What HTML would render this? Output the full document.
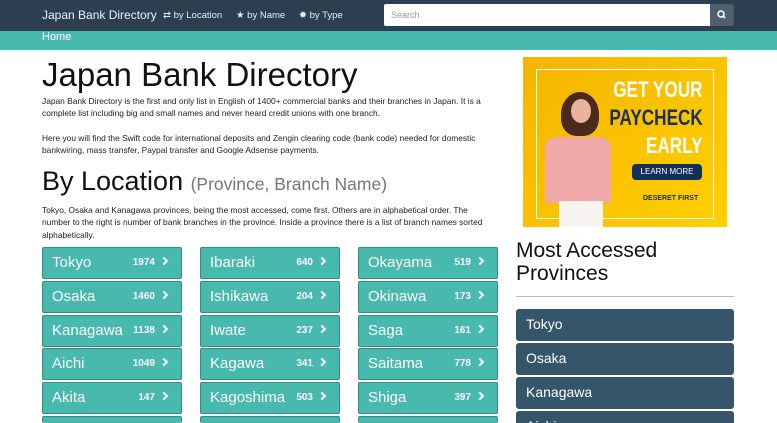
<!DOCTYPE html>
<html><head><meta charset="utf-8"><style>
*{box-sizing:border-box;margin:0;padding:0}
html,body{width:777px;height:423px;overflow:hidden}
body{font-family:"Liberation Sans",sans-serif;background:#fff;color:#222;position:relative}
.nav{position:absolute;left:0;top:0;width:777px;height:31px;background:#2c3e50;color:#fff}
.nav .brand{position:absolute;left:42px;top:8px;font-size:12px;color:#eef2f5}
.nav .l{position:absolute;top:10px;font-size:9.5px;color:#e8edf2}
.search{position:absolute;left:384px;top:4px;width:326px;height:22px;background:#fff;border-radius:2px 0 0 2px;font-size:9px;color:#999;padding:6px 7px}
.sbtn{position:absolute;left:710px;top:4px;width:24px;height:22px;background:#4f5f70;border-radius:0 3px 3px 0}
.crumb{position:absolute;left:0;top:31px;width:777px;height:19px;background:#48b9ad;color:#fff;font-size:11px;padding:0 42px;line-height:13px}
h1{position:absolute;left:42px;top:56px;font-size:33px;font-weight:normal;color:#111;white-space:nowrap}
.p{position:absolute;left:42px;font-size:8.4px;line-height:12.3px;width:450px;color:#222}
h2{position:absolute;left:42px;top:166px;font-size:27px;font-weight:normal;color:#111;white-space:nowrap}
h2 small{font-size:17.5px;color:#777}
.b{position:absolute;width:140px;height:32px;background:#48b9ad;border:1px solid #3a8a82;border-radius:2px;color:#fff;font-size:15px;padding:6px 0 0 9px;overflow:hidden}
.b.e{height:7px;border-bottom:0}
.b span{position:absolute;right:14px;top:9px;font-size:10px;font-weight:bold}
.b span:after{content:"";display:inline-block;width:4px;height:4px;border-top:2px solid #fff;border-right:2px solid #fff;transform:rotate(45deg);margin-left:6px;position:relative;top:-1px}
.r{position:absolute;left:516px;width:218px;height:32px;background:#34556a;border-radius:3px;color:#fff;font-size:14px;padding:7px 0 0 10px;overflow:hidden}
h3{position:absolute;left:516px;top:239px;font-size:21px;font-weight:normal;line-height:23px;color:#111}
.hr{position:absolute;left:516px;top:296px;width:218px;height:1px;background:#bbb}
.ad{position:absolute;left:523px;top:57px;width:204px;height:170px;background:linear-gradient(135deg,#f5b400,#ffd000);overflow:hidden}
.ad .t{position:absolute;right:24px;font-weight:bold;font-size:22px;line-height:26px;text-align:right;white-space:nowrap;transform:scaleX(0.78);transform-origin:right}
</style></head><body>
<div class="nav"><div class="brand">Japan Bank Directory</div>
<div class="l" style="left:163px">⇄ by Location</div><div class="l" style="left:236px">★ by Name</div><div class="l" style="left:299px">✹ by Type</div>
<div class="search">Search</div><div class="sbtn"><svg width="24" height="22"><circle cx="11" cy="10" r="3" stroke="#fff" stroke-width="1.6" fill="none"/><line x1="13" y1="12" x2="15" y2="14" stroke="#fff" stroke-width="1.8"/></svg></div></div>
<div class="crumb">Home</div>
<h1>Japan Bank Directory</h1>
<div class="p" style="top:95px">Japan Bank Directory is the first and only list in English of 1400+ commercial banks and their branches in Japan. It is a complete list including big and small names and never heard credit unions with one branch.</div>
<div class="p" style="top:132px">Here you will find the Swift code for international deposits and Zengin clearing code (bank code) needed for domestic bankwiring, mass transfer, Paypal transfer and Google Adsense payments.</div>
<h2>By Location <small>(Province, Branch Name)</small></h2>
<div class="p" style="top:204px">Tokyo, Osaka and Kanagawa provinces, being the most accessed, come first. Others are in alphabetical order. The number to the right is number of bank branches in the province. Inside a province there is a list of branch names sorted alphabetically.</div>
<div class="b" style="left:42px;top:247px">Tokyo<span>1974</span></div>
<div class="b" style="left:42px;top:281px">Osaka<span>1460</span></div>
<div class="b" style="left:42px;top:315px">Kanagawa<span>1138</span></div>
<div class="b" style="left:42px;top:348px">Aichi<span>1049</span></div>
<div class="b" style="left:42px;top:382px">Akita<span>147</span></div>
<div class="b e" style="left:42px;top:416px"></div>
<div class="b" style="left:200px;top:247px">Ibaraki<span>640</span></div>
<div class="b" style="left:200px;top:281px">Ishikawa<span>204</span></div>
<div class="b" style="left:200px;top:315px">Iwate<span>237</span></div>
<div class="b" style="left:200px;top:348px">Kagawa<span>341</span></div>
<div class="b" style="left:200px;top:382px">Kagoshima<span>503</span></div>
<div class="b e" style="left:200px;top:416px"></div>
<div class="b" style="left:358px;top:247px">Okayama<span>519</span></div>
<div class="b" style="left:358px;top:281px">Okinawa<span>173</span></div>
<div class="b" style="left:358px;top:315px">Saga<span>161</span></div>
<div class="b" style="left:358px;top:348px">Saitama<span>778</span></div>
<div class="b" style="left:358px;top:382px">Shiga<span>397</span></div>
<div class="b e" style="left:358px;top:416px"></div>
<div class="ad"><div style="position:absolute;left:13px;top:12px;width:178px;height:150px;border:1px solid #fff"></div>
<div class="t" style="top:20px;color:#fff">GET YOUR</div>
<div class="t" style="top:48px;color:#1c2f55">PAYCHECK</div>
<div class="t" style="top:76px;color:#fff">EARLY</div>
<div style="position:absolute;left:109px;top:107px;width:70px;height:16px;background:#123058;border-radius:4px;color:#fff;font-size:8px;text-align:center;line-height:16px">LEARN MORE</div>
<div style="position:absolute;left:120px;top:138px;color:#1c2f55;font-size:7px;font-weight:bold">DESERET FIRST</div>
<div style="position:absolute;left:38px;top:35px;width:38px;height:44px;border-radius:50% 50% 40% 40%;background:#4a2a1e"></div>
<div style="position:absolute;left:48px;top:42px;width:20px;height:24px;border-radius:50%;background:#e9b49a"></div>
<div style="position:absolute;left:22px;top:80px;width:66px;height:66px;background:#f0a8a8;border-radius:12px 12px 0 0"></div>
<div style="position:absolute;left:36px;top:144px;width:44px;height:26px;background:#f7f3ee"></div></div>
<h3>Most Accessed<br>Provinces</h3>
<div class="hr"></div>
<div class="r" style="top:309px">Tokyo</div>
<div class="r" style="top:343px">Osaka</div>
<div class="r" style="top:377px">Kanagawa</div>
<div class="r" style="top:411px;height:12px;border-radius:3px 3px 0 0">Aichi</div>
</body></html>
